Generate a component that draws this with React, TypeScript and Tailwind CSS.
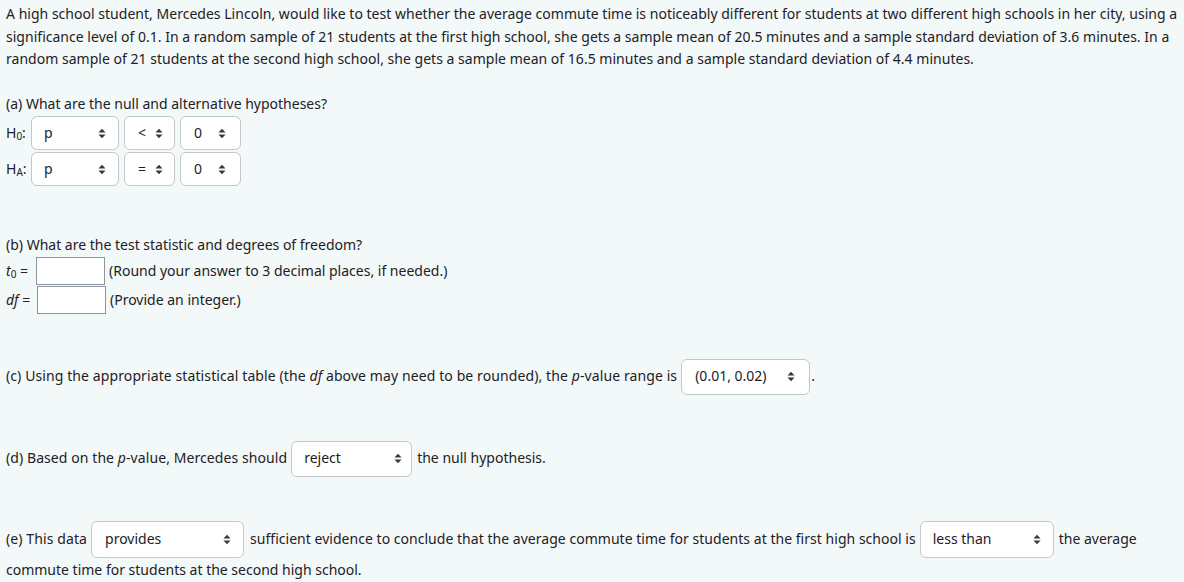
import React from "react";

function Arrows() {
  return (
    <svg width="8" height="11" viewBox="0 0 8 11" className="shrink-0">
      <polygon points="0.5,4.5 4,0.8 7.5,4.5" fill="#343a40" />
      <polygon points="0.5,6.5 4,10.2 7.5,6.5" fill="#343a40" />
    </svg>
  );
}

function Select({ value, w, h, pl, pr, className }: { value: string; w: string; h: string; pl: string; pr: string; className?: string }) {
  return (
    <span
      className={`inline-flex items-center justify-between shrink-0 rounded-[6px] border border-[#c3c7cb] bg-white text-[#1d2125] tracking-normal ${w} ${h} ${pl} ${pr} ${className ?? ""}`}
    >
      <span className="whitespace-nowrap">{value}</span>
      <Arrows />
    </span>
  );
}

export default function App() {
  return (
    <div className="w-[1184px] h-[582px] overflow-hidden bg-[#f3f8f8] text-[#1d2125] text-[14px] leading-[22.5px] px-[6px] pt-[3px] font-['Noto_Sans',sans-serif]">
      <p className="tracking-[0.02px]">
        A high school student, Mercedes Lincoln, would like to test whether the average commute time is noticeably different for students at two different high schools in her city, using a significance level of 0.1. In a random sample of 21 students at the first high school, she gets a sample mean of 20.5 minutes and a sample standard deviation of 3.6 minutes. In a random sample of 21 students at the second high school, she gets a sample mean of 16.5 minutes and a sample standard deviation of 4.4 minutes.
      </p>

      <p className="mt-[22px]">(a) What are the null and alternative hypotheses?</p>
      <div className="flex flex-col gap-[2px] mt-[1px]">
        <div className="flex items-center h-[34px]">
          <span className="w-[25px] whitespace-nowrap">H<sub className="text-[10px]">0</sub>:</span>
          <Select value="p" w="w-[88px]" h="h-[34px]" pl="pl-[12px]" pr="pr-[12px]" />
          <Select value="<" w="w-[51px]" h="h-[34px]" pl="pl-[13px]" pr="pr-[11px]" className="ml-[5px]" />
          <Select value="0" w="w-[61px]" h="h-[34px]" pl="pl-[13px]" pr="pr-[14px]" className="ml-[5px]" />
        </div>
        <div className="flex items-center h-[34px]">
          <span className="w-[25px] whitespace-nowrap">H<sub className="text-[10px]">A</sub>:</span>
          <Select value="p" w="w-[88px]" h="h-[34px]" pl="pl-[12px]" pr="pr-[12px]" />
          <Select value="=" w="w-[51px]" h="h-[34px]" pl="pl-[13px]" pr="pr-[11px]" className="ml-[5px]" />
          <Select value="0" w="w-[61px]" h="h-[34px]" pl="pl-[13px]" pr="pr-[14px]" className="ml-[5px]" />
        </div>
      </div>

      <p className="mt-[48px]">(b) What are the test statistic and degrees of freedom?</p>
      <div className="flex flex-col">
        <div className="flex items-center h-[29px]">
          <span className="w-[30px] whitespace-nowrap"><i>t</i><sub className="text-[10px]">0</sub> =</span>
          <span className="w-[69px] h-[28px] border border-[#8f959e] bg-white" />
          <span className="ml-[4px] whitespace-nowrap">(Round your answer to 3 decimal places, if needed.)</span>
        </div>
        <div className="flex items-center h-[29px]">
          <span className="w-[31px] whitespace-nowrap"><i>df</i> =</span>
          <span className="w-[69px] h-[28px] border border-[#8f959e] bg-white" />
          <span className="ml-[4px] whitespace-nowrap">(Provide an integer.)</span>
        </div>
      </div>

      <div className="flex items-center h-[36px] mt-[44px] whitespace-nowrap">
        <span className="tracking-[0.1px]">(c) Using the appropriate statistical table (the <i>df</i> above may need to be rounded), the <i>p</i>-value range is</span>
        <Select value="(0.01, 0.02)" w="w-[129px]" h="h-[36px]" pl="pl-[13px]" pr="pr-[14px]" className="ml-[4px]" />
        <span className="ml-[1px]">.</span>
      </div>

      <div className="flex items-center h-[36px] mt-[46px] whitespace-nowrap">
        <span className="tracking-[0.08px]">(d) Based on the <i>p</i>-value, Mercedes should</span>
        <Select value="reject" w="w-[121px]" h="h-[36px]" pl="pl-[12px]" pr="pr-[9px]" className="ml-[4px]" />
        <span className="ml-[5px]">the null hypothesis.</span>
      </div>

      <div className="flex items-center h-[37px] mt-[44px] whitespace-nowrap">
        <span className="tracking-[0.1px]">(e) This data</span>
        <Select value="provides" w="w-[153px]" h="h-[37px]" pl="pl-[13px]" pr="pr-[12px]" className="ml-[4px]" />
        <span className="ml-[6px] tracking-[0.03px]">sufficient evidence to conclude that the average commute time for students at the first high school is</span>
        <Select value="less than" w="w-[134px]" h="h-[37px]" pl="pl-[12px]" pr="pr-[12px]" className="ml-[4px]" />
        <span className="ml-[5px]">the average</span>
      </div>
      <p className="whitespace-nowrap mt-[1px]">commute time for students at the second high school.</p>
    </div>
  );
}
